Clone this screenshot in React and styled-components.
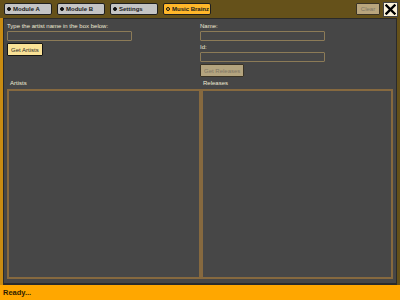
import React from 'react';
import styled, { createGlobalStyle } from 'styled-components';

const Global = createGlobalStyle`
  html, body { margin: 0; padding: 0; }
  body { font-family: "Liberation Sans", Arial, sans-serif; }
`;

const Frame = styled.div`
  width: 400px;
  height: 300px;
  display: flex;
  flex-direction: column;
  background: #65511a;
  overflow: hidden;
`;

const TopBar = styled.div`
  height: 18px;
  display: flex;
  align-items: center;
  gap: 5px;
  padding: 0 2px 0 4px;
  box-sizing: border-box;
`;

const Tab = styled.div`
  width: 48px;
  height: 12px;
  box-sizing: border-box;
  display: flex;
  align-items: center;
  gap: 2px;
  padding-left: 2px;
  border: 1px solid #1e1e1e;
  border-radius: 2px;
  background: ${(p) => (p.active ? '#ffb72a' : '#c4c4c4')};
  font-size: 6px;
  font-weight: bold;
  color: #1a1a1a;
  white-space: nowrap;
`;

const Bullet = styled.span`
  width: 4px;
  height: 4px;
  flex: none;
  border-radius: 50%;
  box-sizing: border-box;
  background: ${(p) => (p.ring ? 'transparent' : '#111')};
  border: 1px solid #111;
`;

const Spacer = styled.div`
  flex: 1;
`;

const ClearButton = styled.div`
  width: 24px;
  height: 12px;
  box-sizing: border-box;
  display: flex;
  align-items: center;
  justify-content: center;
  background: #b9a57d;
  border: 1px solid #3a3325;
  border-radius: 1px;
  font-size: 6px;
  color: #7d7565;
  margin-right: -2px;
`;

const CloseButton = styled.div`
  width: 15px;
  height: 15px;
  box-sizing: border-box;
  display: flex;
  align-items: center;
  justify-content: center;
  background: #fbf3d9;
  border: 1px solid #444;
`;

const Body = styled.div`
  flex: 1;
  display: flex;
  border-left: 3px solid #c98c12;
`;

const Main = styled.div`
  flex: 1;
  margin-right: 3px;
  background: #464646;
  border: 1px solid #2a2a2a;
  border-bottom-width: 2px;
  display: flex;
  flex-direction: column;
  padding: 3px 3px 4px 3px;
  box-sizing: border-box;
`;

const FormRow = styled.div`
  display: grid;
  grid-template-columns: 193px 1fr;
  height: 57px;
`;

const Column = styled.div`
  display: flex;
  flex-direction: column;
  align-items: flex-start;
  padding-left: ${(p) => p.inset || 0}px;
`;

const Label = styled.div`
  font-size: 6px;
  color: #efe8d4;
  height: 9px;
  line-height: 9px;
  padding-left: ${(p) => p.inset || 0}px;
  white-space: nowrap;
`;

const TextInput = styled.div`
  width: 125px;
  height: 10px;
  box-sizing: border-box;
  border: 1px solid #8c7b57;
  border-radius: 1px;
  background: #474747;
  margin-bottom: 2px;
`;

const Button = styled.div`
  height: 13px;
  box-sizing: border-box;
  padding: 0 3px;
  display: flex;
  align-items: center;
  border: 1px solid ${(p) => (p.enabled ? '#141414' : '#3a3325')};
  border-radius: 1px;
  background: ${(p) => (p.enabled ? '#f9e196' : '#b4a47e')};
  color: ${(p) => (p.enabled ? '#2a2a2a' : '#7d7565')};
  font-size: 6px;
`;

const ListRow = styled.div`
  flex: 1;
  display: grid;
  grid-template-columns: 194px 1fr;
`;

const ListColumn = styled.div`
  display: flex;
  flex-direction: column;
`;

const ListBox = styled.div`
  flex: 1;
  margin-top: 1px;
  border: 2px solid #86693f;
  background: #474747;
  box-sizing: border-box;
`;

const StatusBar = styled.div`
  height: 15px;
  background: #ffa700;
  display: flex;
  align-items: center;
  padding-left: 3px;
  font-size: 7.5px;
  font-weight: bold;
  color: #2e1c00;
`;

const tabs = [
  { label: 'Module A' },
  { label: 'Module B' },
  { label: 'Settings' },
  { label: 'Music Brainz', active: true },
];

export default function App() {
  return (
    <>
      <Global />
      <Frame>
        <TopBar>
          {tabs.map((t) => (
            <Tab key={t.label} active={t.active}>
              <Bullet ring={t.active} />
              {t.label}
            </Tab>
          ))}
          <Spacer />
          <ClearButton>Clear</ClearButton>
          <CloseButton>
            <svg width="11" height="11" viewBox="0 0 11 11">
              <path d="M1.5 1.5 L9.5 9.5 M9.5 1.5 L1.5 9.5" stroke="#000" strokeWidth="2.4" strokeLinecap="square" />
            </svg>
          </CloseButton>
        </TopBar>
        <Body>
          <Main>
            <FormRow>
              <Column>
                <Label>Type the artist name in the box below:</Label>
                <TextInput />
                <Button enabled>Get Artists</Button>
              </Column>
              <Column>
                <Label>Name:</Label>
                <TextInput />
                <Label>Id:</Label>
                <TextInput />
                <Button>Get Releases</Button>
              </Column>
            </FormRow>
            <ListRow>
              <ListColumn>
                <Label inset={3}>Artists</Label>
                <ListBox />
              </ListColumn>
              <ListColumn>
                <Label inset={2}>Releases</Label>
                <ListBox />
              </ListColumn>
            </ListRow>
          </Main>
        </Body>
        <StatusBar>Ready...</StatusBar>
      </Frame>
    </>
  );
}
